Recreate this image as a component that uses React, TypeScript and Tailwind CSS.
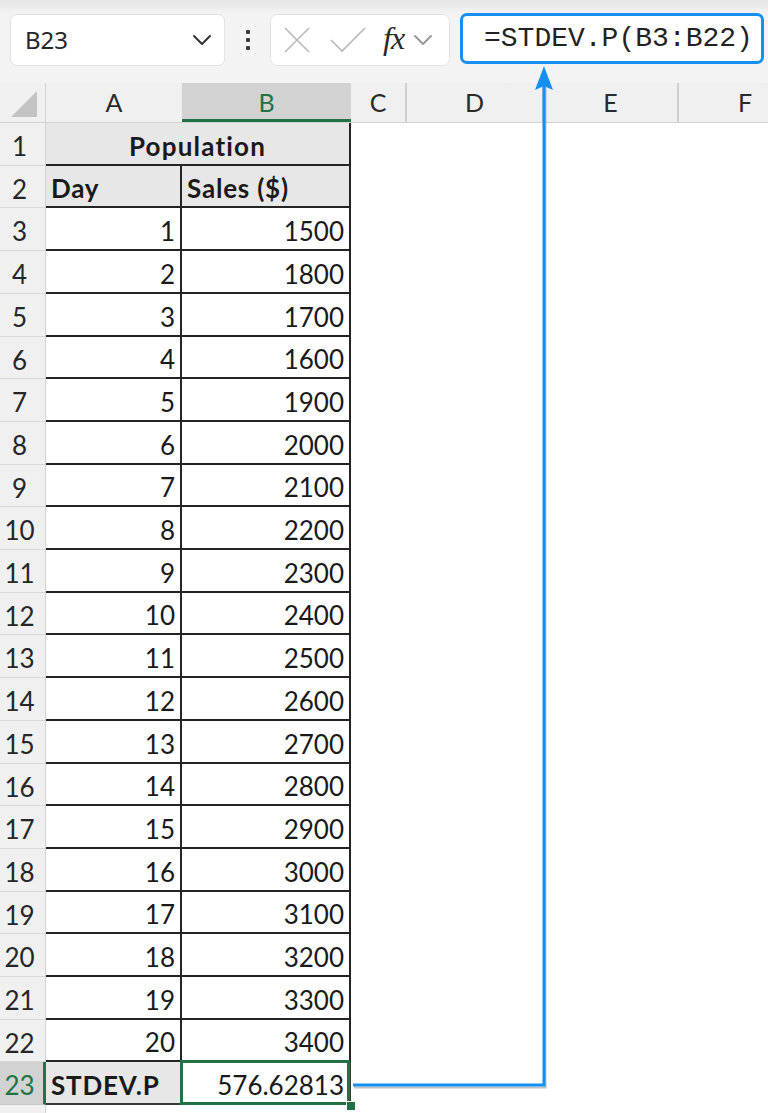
import React from 'react'

const SALES = [1500, 1800, 1700, 1600, 1900, 2000, 2100, 2200, 2300, 2400, 2500, 2600, 2700, 2800, 2900, 3000, 3100, 3200, 3300, 3400]

const ROW_H = 42.7

// rows alternate 42/43px so the grid lines stay crisp
const rowHeight = (i: number) => Math.round((i + 1) * ROW_H) - Math.round(i * ROW_H)

function Chevron({ className }: { className?: string }) {
  return (
    <svg className={className} width="20" height="12" viewBox="0 0 20 12" fill="none">
      <path d="M2 2 L10 10 L18 2" stroke="currentColor" strokeWidth="2" strokeLinecap="round" strokeLinejoin="round" />
    </svg>
  )
}

function Toolbar() {
  return (
    <div className="h-[83px] bg-linear-to-b from-[#e6e6e6] from-0% to-[#f3f3f3] to-[16%] flex items-start pl-[10px] pt-[14px]">
      <div className="w-[215px] h-[52px] bg-white rounded-[7px] border border-[#e2e2e2] flex items-center justify-between pl-[14px] pr-[12px]">
        <span className="text-[24px] text-[#262626] [font-family:'Noto_Sans',sans-serif] leading-none">B23</span>
        <Chevron className="text-[#333]" />
      </div>
      <div className="w-[45px] h-[52px] flex flex-col items-center justify-center gap-[4px]">
        <div className="w-[4px] h-[4px] bg-[#3c3c3c] rounded-[1px]" />
        <div className="w-[4px] h-[4px] bg-[#3c3c3c] rounded-[1px]" />
        <div className="w-[4px] h-[4px] bg-[#3c3c3c] rounded-[1px]" />
      </div>
      <div className="w-[180px] h-[52px] bg-white rounded-[7px] border border-[#e2e2e2] flex items-center pl-[12px]">
        <svg width="28" height="26" viewBox="0 0 28 26" fill="none">
          <path d="M2 1 L26 25 M26 1 L2 25" stroke="#b8b8b8" strokeWidth="1.6" />
        </svg>
        <svg className="ml-[19px]" width="36" height="26" viewBox="0 0 36 26" fill="none">
          <path d="M1 13 L12 24 L35 1" stroke="#b8b8b8" strokeWidth="1.6" />
        </svg>
        <span className="ml-[17px] text-[32px] italic text-[#2a2a2a] [font-family:'Liberation_Serif',serif] leading-none -mt-[4px] tracking-[-1px]">fx</span>
        <Chevron className="ml-[8px] text-[#9a9a9a] w-[22px]" />
      </div>
      <div className="ml-[10px] -mt-[1px] w-[304px] h-[51px] bg-white rounded-[7px] border-[3px] border-[#1590f2] flex items-center pl-[21px]">
        <span className="text-[28px] text-[#222] [font-family:'Liberation_Mono',monospace] leading-none">=STDEV.P(B3:B22)</span>
      </div>
    </div>
  )
}

function HeaderRow() {
  return (
    <div className="h-[40px] flex bg-[#f0f0f0] border-b border-[#d2d2d2] text-[25px] text-[#2a2a2a]">
      <div className="w-[46px] shrink-0 border-r border-[#d2d2d2] flex items-end justify-end pr-[8px] pb-[5px]">
        <svg width="26" height="26" viewBox="0 0 26 26">
          <polygon points="26,0 26,26 0,26" fill="#c3c3c3" />
        </svg>
      </div>
      <div className="w-[136px] shrink-0 flex items-center justify-center">A</div>
      <div className="w-[169px] shrink-0 flex items-center justify-center bg-[#d2d2d2] text-[#217346] border-b-[3px] border-[#217346] pt-[3px]">B</div>
      <div className="w-[56px] shrink-0 flex items-center justify-center border-r-2 border-[#d0d0d0]">C</div>
      <div className="w-[137px] shrink-0 flex items-center justify-center border-r-2 border-[#d0d0d0]">D</div>
      <div className="w-[135px] shrink-0 flex items-center justify-center border-r-2 border-[#d0d0d0]">E</div>
      <div className="w-[132px] shrink-0 flex items-center justify-center">F</div>
    </div>
  )
}

function RowHeader({ n, selected }: { n?: number; selected?: boolean }) {
  return (
    <div
      className={
        selected
          ? 'w-[46px] shrink-0 bg-[#d2d2d2] text-[#217346] border-r-[3px] border-[#217346] border-b border-b-[#c8c8c8] flex items-center justify-center pr-[4px] pt-[5px]'
          : 'w-[46px] shrink-0 bg-[#f0f0f0] text-[#262626] border-r border-[#d2d2d2] border-b border-b-[#d8d8d8] flex items-center justify-center pr-[6px] pt-[5px]'
      }
    >
      {n}
    </div>
  )
}

function Row({ i, children, selected, label = true }: { i: number; children?: React.ReactNode; selected?: boolean; label?: boolean }) {
  const h = rowHeight(i)
  return (
    <div className={(h === 43 ? 'h-[43px]' : 'h-[42px]') + ' flex text-[26px] text-[#1a1a1a]'}>
      <RowHeader n={label ? i + 1 : undefined} selected={selected} />
      {children}
      <div className="flex-1 bg-white" />
    </div>
  )
}

export default function App() {
  return (
    <div className="relative w-[768px] h-[1113px] overflow-hidden bg-white [font-family:Lato,sans-serif]">
      <Toolbar />
      <HeaderRow />

      <Row i={0}>
        <div className="w-[305px] shrink-0 bg-[#e7e7e7] border-b-2 border-r-2 border-[#242424] flex items-center justify-center pt-[5px] font-bold tracking-[1.2px]">
          Population
        </div>
      </Row>
      <Row i={1}>
        <div className="w-[136px] shrink-0 bg-[#e7e7e7] border-b-2 border-r-2 border-[#242424] flex items-center pl-[5px] pt-[5px] font-bold tracking-[0.8px]">Day</div>
        <div className="w-[169px] shrink-0 bg-[#e7e7e7] border-b-2 border-r-2 border-[#242424] flex items-center pl-[5px] pt-[5px] font-bold tracking-[0.8px]">Sales ($)</div>
      </Row>
      {SALES.map((s, k) => (
        <Row key={k} i={k + 2}>
          <div className="w-[136px] shrink-0 bg-white border-b-2 border-r-2 border-[#242424] flex items-center justify-end pr-[5px] pt-[5px]">{k + 1}</div>
          <div className="w-[169px] shrink-0 bg-white border-b-2 border-r-2 border-[#242424] flex items-center justify-end pr-[5px] pt-[5px]">{s}</div>
        </Row>
      ))}
      <Row i={22} selected>
        <div className="w-[136px] shrink-0 bg-[#e7e7e7] border-b-2 border-r-2 border-[#3a3a3a] flex items-center pl-[5px] pt-[5px] font-bold tracking-[0.8px]">STDEV.P</div>
        <div className="relative w-[169px] shrink-0 bg-white border-b-2 border-r-2 border-[#3a3a3a] flex items-center justify-end pr-[5px] pt-[5px]">
          576.62813
          <div className="absolute -left-[2px] -top-[2px] -right-[1px] -bottom-[2px] border-[3px] border-[#217346]" />
          <div className="absolute left-[164px] top-[39px] w-[10px] h-[10px] bg-[#217346] border border-white z-10" />
        </div>
      </Row>
      <Row i={23} label={false} />

      <svg className="absolute left-0 top-0 pointer-events-none z-20" width="768" height="1113" viewBox="0 0 768 1113" fill="none">
        <path d="M354 1087.5 H545.5 V86" stroke="#8c8c8c" strokeOpacity="0.55" strokeWidth="2" />
        <path d="M353 1085 H544 V84" stroke="#1590f2" strokeWidth="3" />
        <polygon points="544,66 535,90 544,86 553,90" fill="#1590f2" />
      </svg>
    </div>
  )
}
